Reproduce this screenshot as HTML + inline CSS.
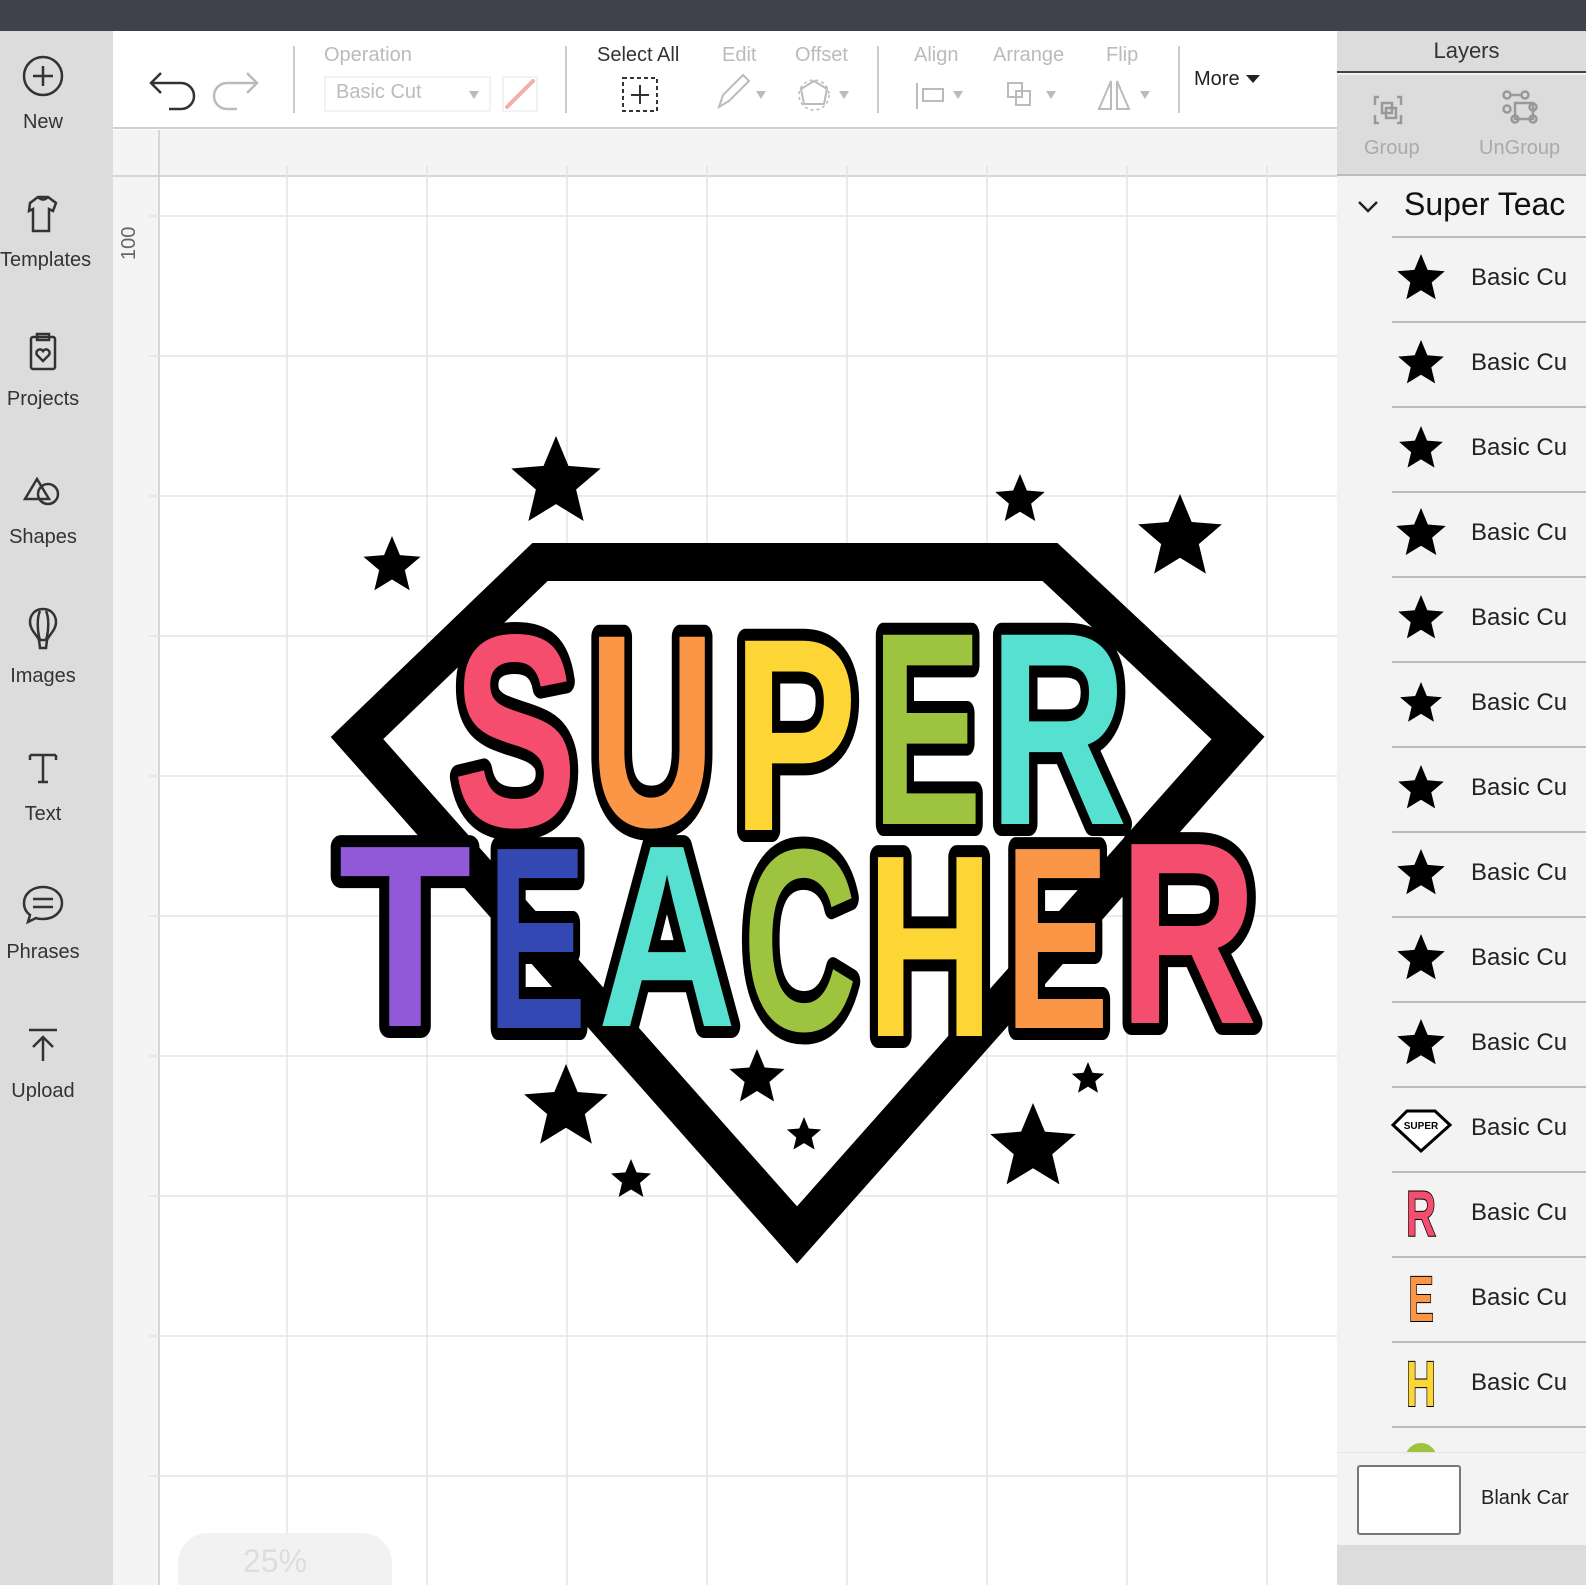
<!DOCTYPE html>
<html><head><meta charset="utf-8"><style>
*{margin:0;padding:0;box-sizing:border-box}
body{width:1586px;height:1585px;overflow:hidden;position:relative;background:#fff;font-family:"Liberation Sans",sans-serif}
.abs{position:absolute}
.top{left:0;top:0;width:1586px;height:31px;background:#3f424a}
.side{left:0;top:31px;width:113px;height:1554px;background:#dcdcdc}
.si{position:absolute;left:0;width:86px;text-align:center;font-size:20px;color:#333;white-space:nowrap}
.tb{left:113px;top:31px;width:1224px;height:98px;background:#fff;border-bottom:2px solid #d0d0d0}
.lbl{position:absolute;font-size:20px;color:#bbb}
.rp{left:1337px;top:31px;width:249px;height:1554px;background:#f3f3f3}
.row{position:absolute;left:55px;width:200px;height:85px;border-top:2px solid #bbb}
.row span{position:absolute;left:79px;top:26px;font-size:24px;color:#222}
</style></head><body>
<div class="abs top"></div>
<div class="abs side">
 <svg class="abs" style="left:0;top:0" width="113" height="1100" fill="none" stroke="#333" stroke-width="2.5">
  <circle cx="43" cy="45" r="19"/><path d="M43 35v20M33 45h20"/>
  <path d="M30 172l8-6h10l8 6-3 8-4-2v22H33v-22l-4 2z"/><path d="M38 166q5 5 10 0"/>
  <rect x="31" y="306" width="24" height="32" rx="2"/><path d="M37 303h12v6H37z"/><path d="M43 330l-6-6a3.5 3.5 0 0 1 6-4 3.5 3.5 0 0 1 6 4z"/>
  <path d="M25 468l12-20 12 20z"/><circle cx="48" cy="463" r="10"/>
  <path d="M43 578c-9 0-13 7-13 13 0 8 7 13 9 18h8c2-5 9-10 9-18 0-6-4-13-13-13z"/><path d="M39 609l1 8h6l1-8M40 580c-3 6-3 20 0 29M46 580c3 6 3 20 0 29"/>
  <path d="M30 724h26M43 724v27M30 724v5M56 724v5M38 751h10"/>
  <path d="M43 856c-11 0-19 7-19 16 0 5 2 9 6 12l-2 7 8-4c2 1 5 1 7 1 11 0 19-7 19-16s-8-16-19-16z"/><path d="M33 868h20M33 876h20"/>
  <path d="M29 999h28M43 1030v-24M33 1016l10-10 10 10"/>
 </svg>
 <div class="si" style="top:80px">New</div>
 <div class="si" style="top:218px">Templates</div>
 <div class="si" style="top:357px">Projects</div>
 <div class="si" style="top:495px">Shapes</div>
 <div class="si" style="top:634px">Images</div>
 <div class="si" style="top:772px">Text</div>
 <div class="si" style="top:910px">Phrases</div>
 <div class="si" style="top:1049px">Upload</div>
</div>
<div class="abs tb">
 <svg class="abs" style="left:0;top:0" width="1224" height="98" fill="none">
  <path d="M38 52h30a13 13 0 0 1 0 26H56M48 42l-10 10 10 10" stroke="#333" stroke-width="2.5"/>
  <path d="M144 52h-30a13 13 0 0 0 0 26h10M134 42l10 10-10 10" stroke="#bbb" stroke-width="2.5"/>
  <path d="M181 15v67M453 15v67M765 15v67M1066 15v67" stroke="#ccc" stroke-width="2"/>
  <rect x="212" y="46" width="165" height="34" stroke="#eee" stroke-width="1.5"/>
  <path d="M356 60h10l-5 8z" fill="#bbb"/>
  <rect x="390" y="46" width="34" height="34" stroke="#eee" stroke-width="1.5"/>
  <path d="M394 76l26-26" stroke="#f0b0a5" stroke-width="4" stroke-linecap="round"/>
  <rect x="510" y="47" width="34" height="33" stroke="#333" stroke-width="2" stroke-dasharray="4 3"/>
  <path d="M527 54v19M518 64h18" stroke="#333" stroke-width="2"/>
  <path d="M606 76l4-12 20-20 6 6-20 20z" stroke="#bbb" stroke-width="2"/><path d="M643 60h10l-5 8z" fill="#bbb"/>
  <path d="M701 50l13 8-3 15h-20l-3-15z" stroke="#bbb" stroke-width="2"/><circle cx="701" cy="64" r="15" stroke="#bbb" stroke-width="1.5" stroke-dasharray="3 3"/><path d="M726 60h10l-5 8z" fill="#bbb"/>
  <path d="M804 52v26M810 58h20v12h-20z" stroke="#bbb" stroke-width="2"/><path d="M840 60h10l-5 8z" fill="#bbb"/>
  <path d="M895 52h14v14h-14zM903 60h14v14h-14z" stroke="#bbb" stroke-width="2"/><path d="M933 60h10l-5 8z" fill="#bbb"/>
  <path d="M998 50v28h-12zM1004 50v28h12z" stroke="#bbb" stroke-width="2"/><path d="M1027 60h10l-5 8z" fill="#bbb"/>
  <path d="M1133 44h14l-7 8z" fill="#222"/>
 </svg>
 <div class="lbl" style="left:211px;top:13px">Operation</div>
 <div class="lbl" style="left:223px;top:50px">Basic Cut</div>
 <div class="lbl" style="left:484px;top:13px;color:#333">Select All</div>
 <div class="lbl" style="left:609px;top:13px">Edit</div>
 <div class="lbl" style="left:682px;top:13px">Offset</div>
 <div class="lbl" style="left:801px;top:13px">Align</div>
 <div class="lbl" style="left:880px;top:13px">Arrange</div>
 <div class="lbl" style="left:993px;top:13px">Flip</div>
 <div class="lbl" style="left:1081px;top:37px;color:#222">More</div>
</div>
<svg class="abs" style="left:113px;top:130px" width="1224" height="1455">
 <rect x="0" y="0" width="1224" height="46" fill="#f4f4f4"/>
 <rect x="0" y="0" width="46" height="1455" fill="#f4f4f4"/>
 <path d="M46 0v1455M0 46h1224" stroke="#ccc" stroke-width="1.5"/>
 <g stroke="#e4e4e4" stroke-width="1.5">
  <path d="M174 36v1419M314 36v1419M454 36v1419M594 36v1419M734 36v1419M874 36v1419M1014 36v1419M1154 36v1419"/>
  <path d="M36 86h1188M36 226h1188M36 366h1188M36 506h1188M36 646h1188M36 786h1188M36 926h1188M36 1066h1188M36 1206h1188M36 1346h1188"/>
 </g>
 <text transform="translate(22,130) rotate(-90)" font-size="20" fill="#666" font-family="Liberation Sans">100</text>
 <rect x="65" y="1403" width="214" height="80" rx="30" fill="#f2f2f2"/>
 <text x="130" y="1442" font-size="32" fill="#ddd" font-family="Liberation Sans">25%</text>
</svg>
<svg class="abs" style="left:0;top:0" width="1337" height="1585">
 <defs><polygon id="st" points="0,-1 0.265,-0.364 0.951,-0.309 0.428,0.139 0.588,0.809 0,0.45 -0.588,0.809 -0.428,0.139 -0.951,-0.309 -0.265,-0.364"/></defs>
 <polygon points="540,562 1050,562 1238,738 797,1235 357,738" fill="#fff" stroke="#000" stroke-width="38" stroke-linejoin="miter"/>
 <g fill="#000">
  <use href="#st" transform="translate(556,483) scale(47)"/>
  <use href="#st" transform="translate(392,566) scale(30)"/>
  <use href="#st" transform="translate(1020,500) scale(26)"/>
  <use href="#st" transform="translate(1180,538) scale(44)"/>
  <use href="#st" transform="translate(566,1108) scale(44)"/>
  <use href="#st" transform="translate(757,1078) scale(29)"/>
  <use href="#st" transform="translate(804,1135) scale(18)"/>
  <use href="#st" transform="translate(631,1180) scale(21)"/>
  <use href="#st" transform="translate(1033,1148) scale(45)"/>
  <use href="#st" transform="translate(1088,1079) scale(17)"/>
 </g>
 <g font-family="Liberation Sans" font-weight="bold" text-anchor="middle" stroke="#000" stroke-width="24" paint-order="stroke" stroke-linejoin="round">
  <g font-size="275">
   <text transform="translate(515,826) scale(0.68,1)" fill="#f44d6e">S</text>
   <text transform="translate(652,826) scale(0.64,1)" fill="#fb9646">U</text>
   <text transform="translate(795,830) scale(0.68,1)" fill="#fdd535">P</text>
   <text transform="translate(927,824) scale(0.6,1)" fill="#9ec33e">E</text>
   <text transform="translate(1058,824) scale(0.7,1)" fill="#55e0d0">R</text>
  </g>
  <g font-size="260">
   <text transform="translate(405,1026) scale(0.84,1)" fill="#9158d8">T</text>
   <text transform="translate(537,1028) scale(0.57,1)" fill="#3448b3">E</text>
   <text transform="translate(667,1026) scale(0.74,1)" fill="#55e0d0">A</text>
   <text transform="translate(800,1030) scale(0.61,1)" fill="#9ec33e">C</text>
   <text transform="translate(930,1036) scale(0.68,1)" fill="#fdd535">H</text>
   <text transform="translate(1057,1028) scale(0.6,1)" fill="#fb9646">E</text>
   <text transform="translate(1188,1023) scale(0.74,1)" fill="#f44d6e">R</text>
  </g>
 </g>
</svg>
<div class="abs rp">
 <div class="abs" style="left:0;top:0;width:249px;height:42px;background:#dcdcdc;border-bottom:2px solid #444;text-align:center;font-size:22px;color:#333;line-height:40px;padding-left:10px">Layers</div>
 <div class="abs" style="left:0;top:44px;width:249px;height:101px;background:#dcdcdc;border-bottom:2px solid #bbb"></div>
 <svg class="abs" style="left:0;top:44px" width="249" height="100" fill="none" stroke="#999" stroke-width="2.5">
  <path d="M42 22h-4v8M60 22h4v8M42 48h-4v-8M60 48h4v-8"/><rect x="45" y="28" width="10" height="10"/><rect x="49" y="33" width="10" height="10"/>
  <circle cx="170" cy="20" r="3.5"/><circle cx="188" cy="20" r="3.5"/><circle cx="170" cy="34" r="3.5"/><circle cx="196" cy="32" r="3.5"/><circle cx="178" cy="44" r="3.5"/><circle cx="196" cy="44" r="3.5"/><path d="M173 20h12M178 28h18v16h-18z"/>
 </svg>
 <div class="abs" style="left:27px;top:106px;font-size:20px;color:#aaa">Group</div>
 <div class="abs" style="left:142px;top:106px;font-size:20px;color:#aaa">UnGroup</div>
 <svg class="abs" style="left:20px;top:165px" width="24" height="20"><path d="M2 6l9 9 9-9" fill="none" stroke="#222" stroke-width="2.5"/></svg>
 <div class="abs" style="left:67px;top:155px;font-size:32px;color:#111;white-space:nowrap">Super Teac</div>
 <div class="row" style="top:205px"><span>Basic Cu</span></div>
 <div class="row" style="top:290px"><span>Basic Cu</span></div>
 <div class="row" style="top:375px"><span>Basic Cu</span></div>
 <div class="row" style="top:460px"><span>Basic Cu</span></div>
 <div class="row" style="top:545px"><span>Basic Cu</span></div>
 <div class="row" style="top:630px"><span>Basic Cu</span></div>
 <div class="row" style="top:715px"><span>Basic Cu</span></div>
 <div class="row" style="top:800px"><span>Basic Cu</span></div>
 <div class="row" style="top:885px"><span>Basic Cu</span></div>
 <div class="row" style="top:970px"><span>Basic Cu</span></div>
 <div class="row" style="top:1055px"><span>Basic Cu</span></div>
 <div class="row" style="top:1140px"><span>Basic Cu</span></div>
 <div class="row" style="top:1225px"><span>Basic Cu</span></div>
 <div class="row" style="top:1310px"><span>Basic Cu</span></div>
 <div class="row" style="top:1395px"></div>
 <svg class="abs" style="left:0;top:0" width="249" height="1430">
  <defs><polygon id="st2" points="0,-1 0.265,-0.364 0.951,-0.309 0.428,0.139 0.588,0.809 0,0.45 -0.588,0.809 -0.428,0.139 -0.951,-0.309 -0.265,-0.364"/></defs>
  <g fill="#000">
   <use href="#st2" transform="translate(84,248) scale(25)"/>
   <use href="#st2" transform="translate(84,333) scale(24)"/>
   <use href="#st2" transform="translate(84,418) scale(23)"/>
   <use href="#st2" transform="translate(84,503) scale(26)"/>
   <use href="#st2" transform="translate(84,588) scale(24)"/>
   <use href="#st2" transform="translate(84,673) scale(22)"/>
   <use href="#st2" transform="translate(84,758) scale(24)"/>
   <use href="#st2" transform="translate(84,843) scale(25)"/>
   <use href="#st2" transform="translate(84,928) scale(25)"/>
   <use href="#st2" transform="translate(84,1013) scale(25)"/>
  </g>
  <polygon points="70,1080 98,1080 113,1094 84,1120 56,1094" fill="#fff" stroke="#000" stroke-width="3"/>
  <text x="84" y="1098" font-size="10" text-anchor="middle" font-weight="bold" font-family="Liberation Sans">SUPER</text>
  <g font-family="Liberation Sans" font-weight="bold" font-size="64" text-anchor="middle" stroke="#000" stroke-width="2" paint-order="stroke">
   <text transform="translate(84,1205) scale(0.65,1)" fill="#f44d6e">R</text>
   <text transform="translate(84,1290) scale(0.6,1)" fill="#fb9646">E</text>
   <text transform="translate(84,1375) scale(0.65,1)" fill="#fdd535">H</text>
   <circle cx="84" cy="1428" r="16" fill="#9ec33e" stroke="none"/>
  </g>
 </svg>
 <div class="abs" style="left:0;top:1421px;width:249px;height:93px;background:#f3f3f3;border-top:1px solid #e5e5e5"></div>
 <div class="abs" style="left:20px;top:1434px;width:104px;height:70px;border:2px solid #777;border-radius:3px;background:#fff"></div>
 <div class="abs" style="left:144px;top:1456px;font-size:20px;color:#222;white-space:nowrap">Blank Car</div>
 <div class="abs" style="left:0;top:1514px;width:249px;height:40px;background:#dcdcdc"></div>
</div>
</body></html>
